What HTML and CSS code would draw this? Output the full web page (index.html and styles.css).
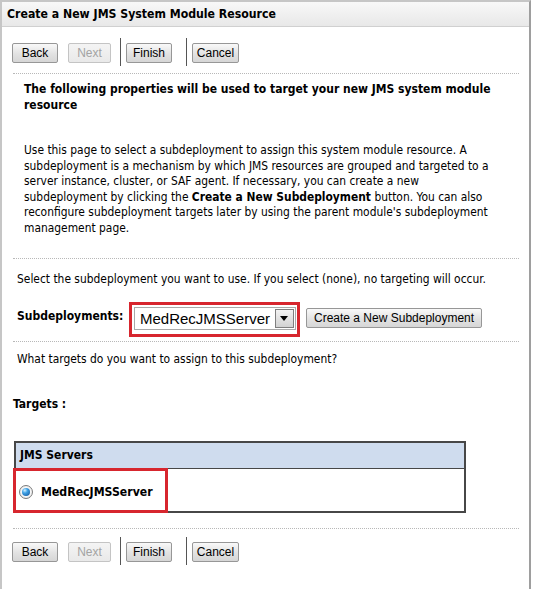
FILE: index.html
```html
<!DOCTYPE html>
<html lang="en">
<head>
    <meta charset="UTF-8">
    <meta name="viewport" content="width=device-width, initial-scale=1.0">
    <title>Create a New JMS System Module Resource</title>
    <link rel="stylesheet" href="styles.css">
</head>
<body>
    <div class="frame">
        <div class="titlebar">Create a New JMS System Module Resource</div>
        <div class="wizard">
            <div class="btnbar">
                <button class="btn btn-back">Back</button>
                <button class="btn btn-next" disabled>Next</button>
                <span class="sep"></span>
                <button class="btn btn-finish">Finish</button>
                <span class="sep sep-wide"></span>
                <button class="btn btn-cancel">Cancel</button>
            </div>
            <div class="rule"></div>

            <div class="intro">
                <h2>The following properties will be used to target your new JMS system module resource</h2>
                <p>Use this page to select a subdeployment to assign this system module resource. A subdeployment is a mechanism by which JMS resources are grouped and targeted to a server instance, cluster, or SAF agent. If necessary, you can create a new subdeployment by clicking the <b>Create a New Subdeployment</b> button. You can also reconfigure subdeployment targets later by using the parent module's subdeployment management page.</p>
            </div>
            <div class="rule rule-low"></div>

            <p class="hint hint-first">Select the subdeployment you want to use. If you select (none), no targeting will occur.</p>
            <div class="field">
                <label class="field-label">Subdeployments:</label>
                <span class="mark">
                    <span class="select">MedRecJMSServer<span class="arrow"></span></span>
                </span>
                <button class="btn btn-create">Create a New Subdeployment</button>
            </div>
            <div class="rule rule-field"></div>

            <p class="hint">What targets do you want to assign to this subdeployment?</p>
            <h3>Targets :</h3>

            <div class="targets">
                <table>
                    <tr><th>JMS Servers</th></tr>
                    <tr>
                        <td>
                            <div class="choice">
                                <span class="radio"></span>
                                <span class="server">MedRecJMSServer</span>
                            </div>
                        </td>
                    </tr>
                </table>
                <div class="targets-mark"></div>
            </div>
            <div class="rule rule-table"></div>

            <div class="btnbar btnbar-bottom">
                <button class="btn btn-back">Back</button>
                <button class="btn btn-next" disabled>Next</button>
                <span class="sep"></span>
                <button class="btn btn-finish">Finish</button>
                <span class="sep sep-wide"></span>
                <button class="btn btn-cancel">Cancel</button>
            </div>
        </div>
    </div>
</body>
</html>
```

FILE: styles.css
```css
body {
    margin: 0;
    font-family: "DejaVu Sans Condensed", "DejaVu Sans", sans-serif;
    font-size: 11.9px;
    color: #000;
    background: #fff;
}
.frame {
    width: 527px;
    height: 587px;
    border: 2px solid #c6c6c6;
    border-right-color: #9e9e9e;
    border-bottom: none;
}
.titlebar {
    height: 24px;
    line-height: 24px;
    padding-left: 5px;
    font-weight: bold;
    font-size: 12.2px;
    background: linear-gradient(#f8f8f8, #e8e8e8);
    border-bottom: 1px solid #d0d0d0;
}
.wizard {
    padding: 0 10px 0 11px;
}
.btnbar {
    display: flex;
    align-items: flex-start;
    height: 28px;
    margin: 11px 0 0 -1px;
}
.btnbar-bottom {
    margin-top: 8px;
}
.btn {
    height: 20px;
    margin-top: 5px;
    padding: 0;
    font-family: "Liberation Sans", Arial, sans-serif;
    font-size: 12px;
    color: #000;
    background: linear-gradient(#f9f9f9, #e2e2e2 55%, #d6d6d6);
    border: 1px solid #979797;
    border-radius: 2px;
}
.btn:disabled {
    color: #a3a3a3;
    background: linear-gradient(#f4f4f4, #e9e9e9);
    border-color: #c4c4c4;
}
.btn-back { width: 46px; }
.btn-next { width: 43px; margin-left: 10px; }
.btn-finish { width: 46px; }
.btn-cancel { width: 47px; }
.sep {
    width: 1px;
    height: 28px;
    margin: 0 5px 0 9px;
    background: #555;
}
.sep-wide {
    margin-left: 14px;
}
.rule {
    margin-top: 7px;
    border-top: 1px dotted #b8b8b8;
}
.rule-low { margin-top: 21px; }
.rule-field { margin-top: 4px; }
.rule-table { margin-top: 15px; }

.intro {
    padding: 0 20px 0 11px;
}
.intro h2 {
    margin: 7px 0 0;
    font-size: 12px;
    line-height: 16px;
}
.intro p {
    margin: 30px 0 0;
    line-height: 15.6px;
}
.hint {
    margin: 9px 0 0;
    padding-left: 4px;
    line-height: 16px;
}
.hint-first {
    margin-top: 12px;
}
.field {
    display: flex;
    align-items: flex-start;
    margin-top: 15px;
    padding-left: 4px;
}
.field-label {
    width: 112px;
    margin-top: 6px;
    font-weight: bold;
    font-size: 12px;
    line-height: 16px;
}
.mark {
    display: block;
    padding: 2px 1px 4px 2px;
    border: 3px solid #d7262e;
}
.select {
    display: flex;
    align-items: center;
    justify-content: space-between;
    box-sizing: border-box;
    width: 162px;
    height: 23px;
    padding: 0 1px 0 5px;
    font-family: "Liberation Sans", Arial, sans-serif;
    font-size: 15px;
    background: #fff;
    border: 1px solid #a9a9a9;
}
.arrow {
    position: relative;
    box-sizing: border-box;
    width: 19px;
    height: 19px;
    background: linear-gradient(#f2f2f2, #d2d2d2);
    border: 1px solid #7f7f7f;
}
.arrow::after {
    content: "";
    position: absolute;
    left: 4px;
    top: 6px;
    border-left: 4.5px solid transparent;
    border-right: 4.5px solid transparent;
    border-top: 5px solid #000;
}
.btn-create {
    margin: 6px 0 0 6px;
    padding: 0 7px;
}
h3 {
    margin: 29px 0 0;
    font-size: 12px;
    line-height: 16px;
}
.targets {
    position: relative;
    margin: 29px 0 0 1px;
    width: 452px;
}
.targets table {
    width: 100%;
    border-collapse: collapse;
    border: 2px solid #474747;
}
.targets th {
    height: 25px;
    padding: 0 0 0 4px;
    text-align: left;
    font-size: 12px;
    background: #cfdcee;
    border-bottom: 1px solid #474747;
}
.targets td {
    padding: 0;
}
.choice {
    display: flex;
    align-items: center;
    gap: 8px;
    box-sizing: border-box;
    height: 42px;
    padding: 4px 0 0 3px;
}
.radio {
    position: relative;
    box-sizing: border-box;
    width: 14px;
    height: 14px;
    border-radius: 50%;
    border: 1px solid #7c7c7c;
    background: radial-gradient(circle, #fff 40%, #d9d9d9);
}
.radio::after {
    content: "";
    position: absolute;
    left: 2px;
    top: 2px;
    width: 8px;
    height: 8px;
    border-radius: 50%;
    background: radial-gradient(circle at 35% 30%, #d4f1ff 0, #3fa2e6 35%, #0c4c93 100%);
}
.server {
    font-weight: bold;
    font-size: 12.2px;
}
.targets-mark {
    position: absolute;
    left: -1px;
    top: 27px;
    box-sizing: border-box;
    width: 155px;
    height: 45px;
    border: 3px solid #d7262e;
}
```
